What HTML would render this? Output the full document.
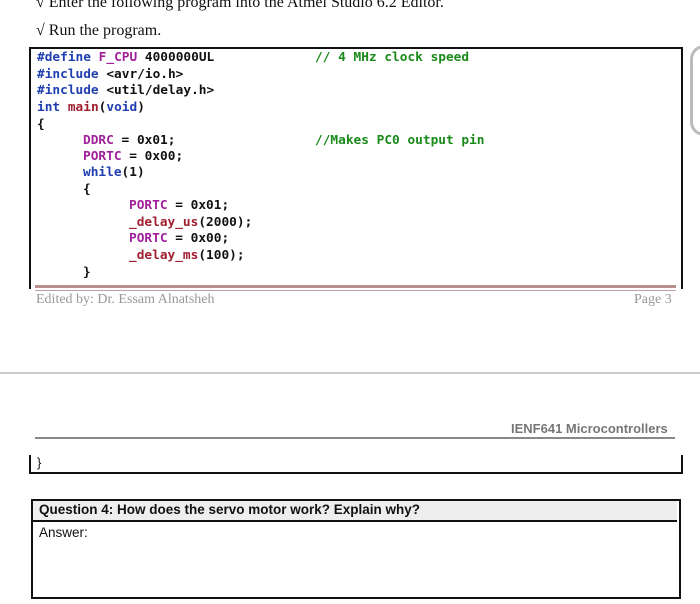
<!DOCTYPE html>
<html><head><meta charset="utf-8"><style>
body{margin:0;width:700px;height:604px;background:#fff;position:relative;overflow:hidden;font-family:"Liberation Serif",serif}
.a{position:absolute;white-space:pre}
.c{font-family:"DejaVu Sans Mono",monospace;font-weight:bold;font-size:12.8px;color:#111;line-height:14px}
.b{color:#1f3fb0}.m{color:#a0209a}.g{color:#1a8a1a}.r{color:#a02030}
.s{font-family:"Liberation Sans",sans-serif}
</style></head><body>
<div class="a" style="left:36px;top:-6px;font-size:16px;color:#111">√ Enter the following program into the Atmel Studio 6.2 Editor.</div>
<div class="a" style="left:36px;top:22px;font-size:16px;color:#111">√ Run the program.</div>
<div style="position:absolute;left:29px;top:47px;width:650px;height:240px;border:2px solid #111;border-bottom:none"></div>
<div style="position:absolute;left:690px;top:45px;width:14px;height:85px;border:3px solid #bbb;border-right:none;border-radius:14px 0 0 14px;background:#fff"></div>
<div class="a c" style="left:37px;top:51px"><span class="b">#define</span> <span class="m">F_CPU</span> 4000000UL</div>
<div class="a c g" style="left:315px;top:51px">// 4 MHz clock speed</div>
<div class="a c" style="left:37px;top:68px"><span class="b">#include</span> &lt;avr/io.h&gt;</div>
<div class="a c" style="left:37px;top:84px"><span class="b">#include</span> &lt;util/delay.h&gt;</div>
<div class="a c" style="left:37px;top:101px"><span class="b">int</span> <span class="r">main</span>(<span class="b">void</span>)</div>
<div class="a c" style="left:37px;top:118px">{</div>
<div class="a c" style="left:83px;top:134px"><span class="m">DDRC</span> = 0x01;</div>
<div class="a c g" style="left:315px;top:134px">//Makes PC0 output pin</div>
<div class="a c" style="left:83px;top:150px"><span class="m">PORTC</span> = 0x00;</div>
<div class="a c" style="left:83px;top:166px"><span class="b">while</span>(1)</div>
<div class="a c" style="left:83px;top:183px">{</div>
<div class="a c" style="left:129px;top:199px"><span class="m">PORTC</span> = 0x01;</div>
<div class="a c" style="left:129px;top:216px"><span class="r">_delay_us</span>(2000);</div>
<div class="a c" style="left:129px;top:232px"><span class="m">PORTC</span> = 0x00;</div>
<div class="a c" style="left:129px;top:249px"><span class="r">_delay_ms</span>(100);</div>
<div class="a c" style="left:83px;top:266px">}</div>
<div style="position:absolute;left:35px;top:285px;width:641px;height:3px;background:#b89090"></div>
<div style="position:absolute;left:35px;top:290px;width:641px;height:1px;background:#c0a0a0"></div>
<div class="a" style="left:36px;top:292px;font-size:14px;color:#999">Edited by: Dr. Essam Alnatsheh</div>
<div class="a" style="left:634px;top:292px;font-size:14px;color:#999">Page 3</div>
<div style="position:absolute;left:0;top:372px;width:700px;height:2px;background:#ccc"></div>
<div class="a s" style="left:511px;top:421px;font-size:13px;color:#777;font-weight:bold">IENF641 Microcontrollers</div>
<div style="position:absolute;left:35px;top:437px;width:640px;height:2px;background:#888"></div>
<div style="position:absolute;left:29px;top:455px;width:650px;height:17px;border:2px solid #111;border-top:none"></div>
<div class="a s" style="left:37px;top:455px;font-size:13px;color:#111">}</div>
<div style="position:absolute;left:31px;top:499px;width:646px;height:96px;border:2px solid #111"></div>
<div style="position:absolute;left:33px;top:501px;background:#eee;border-bottom:2px solid #111;box-sizing:border-box;width:644px;height:21px"></div>
<div class="a s" style="left:39px;top:502px;font-size:13.5px;font-weight:bold;color:#111">Question 4: How does the servo motor work? Explain why?</div>
<div class="a s" style="left:39px;top:525px;font-size:13.5px;color:#111">Answer:</div>
</body></html>
